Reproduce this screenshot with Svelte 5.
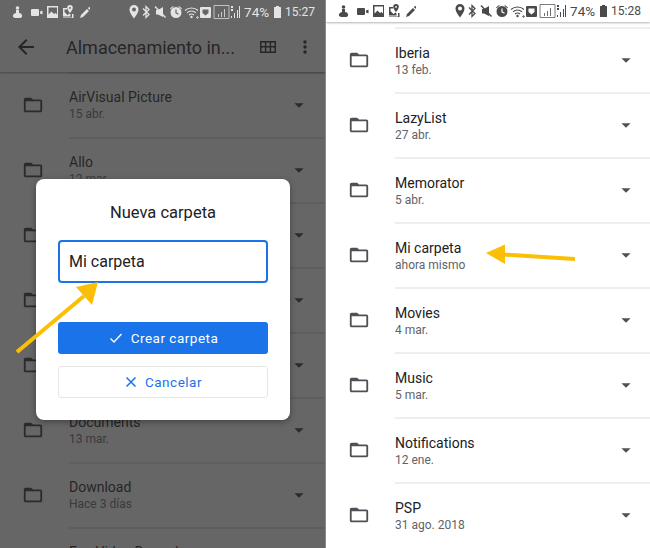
<script>
  // Folder rows for the two phone screens
  const leftRows = [
    { name: "AirVisual Picture", date: "15 abr." },
    { name: "Allo", date: "12 mar." },
    { name: "", date: "" },
    { name: "", date: "" },
    { name: "", date: "" },
    { name: "Documents", date: "13 mar." },
    { name: "Download", date: "Hace 3 días" },
    { name: "Fun Video Recorder", date: "" }
  ];

  const rightRows = [
    { name: "Iberia", date: "13 feb." },
    { name: "LazyList", date: "27 abr." },
    { name: "Memorator", date: "5 abr." },
    { name: "Mi carpeta", date: "ahora mismo" },
    { name: "Movies", date: "4 mar." },
    { name: "Music", date: "5 mar." },
    { name: "Notifications", date: "12 ene." },
    { name: "PSP", date: "31 ago. 2018" }
  ];
</script>

{#snippet statusBar(time)}
  <div class="status">
    <svg class="notif" width="80" height="16" viewBox="0 0 80 16" fill="currentColor">
      <!-- round app icon -->
      <circle cx="7.500" cy="4" r="1.800" />
      <path d="M6 6h3v3l2 .5 1 1.500v2l-1.500 1H5l-2-1V11l1.500-1.500L6 9z" />
      <!-- video -->
      <rect x="21" y="5" width="8" height="7" rx="1" />
      <path d="M30 7.500l2.500-1v4l-2.500-1z" />
      <!-- image -->
      <path fill-rule="evenodd" d="M37 2h11v12H37zM38.500 3.500v7l3-3 2.500 2.500 1.500-1 1.500 1.500V3.500z" />
      <!-- map pin -->
      <path fill-rule="evenodd" d="M53 4h4v1.500h-2.500V8l3 3 2-1.500 1 1V12.500H53zM60 1a2.800 2.800 0 0 1 2.800 2.800C62.800 6 60 9 60 9s-2.800-3-2.800-5.200A2.800 2.800 0 0 1 60 1zM60 3a.9.9 0 1 0 0 1.800A.9.9 0 0 0 60 3zM62 10h1.500v4H53v-.5h9z" />
      <!-- pencil -->
      <path d="M71 11l6-6 2 2-6 6-3 1z" />
      <path d="M77.800 4.200l.9-.9a.7.7 0 0 1 1 0l.3.3v1.800l-.4.4z" />
    </svg>
    <svg class="system" width="111" height="16" viewBox="0 0 111 16" fill="currentColor">
      <!-- location -->
      <path fill-rule="evenodd" d="M5 1a4.500 4.500 0 0 1 4.500 4.500C9.500 9 5 14.500 5 14.500S.5 9 .5 5.500A4.500 4.500 0 0 1 5 1zM5 3.500a2 2 0 1 0 0 4 2 2 0 0 0 0-4z" />
      <!-- bluetooth -->
      <path fill="none" stroke="currentColor" stroke-width="1.300" d="M14 4.500l6 6-3 3v-11l3 3-6 6" />
      <!-- muted speaker -->
      <path d="M27 6h2l5-3v10l-5-2.500h-2z" />
      <path d="M26 2.500l10.500 11" stroke="currentColor" stroke-width="1.400" />
      <!-- alarm -->
      <path fill-rule="evenodd" d="M47 3a5.500 5.500 0 1 1 0 11 5.500 5.500 0 0 1 0-11zM46.400 5.500v3.700l2.800 1.500.6-1-2.200-1.200v-3z" />
      <path d="M41 4.500l3-2.500.6.700-3 2.500zM53 4.500l-3-2.500-.6.700 3 2.500z" />
      <!-- wifi -->
      <path fill="none" stroke="currentColor" stroke-width="1.100" d="M56 6.500a9.500 9.500 0 0 1 13 0M58 8.800a6.500 6.500 0 0 1 9 0M60 11a3.500 3.500 0 0 1 5 0" />
      <circle cx="62.500" cy="13" r="1.200" />
      <path d="M68 12h1v1h1v1h-1v1h-1v-1h-1v-1h1z" opacity=".7" />
      <!-- notification box -->
      <path fill-rule="evenodd" d="M72 3h9a1 1 0 0 1 1 1v9a1 1 0 0 1-1 1h-9a1 1 0 0 1-1-1V4a1 1 0 0 1 1-1zM73.500 5.500v3.500l3 2.500 3-2.500V5.500z" />
      <!-- sim box with bars -->
      <path fill="none" stroke="currentColor" stroke-width=".9" d="M85 1.500h15v13H85z" opacity=".8" />
      <path d="M89 10h1v3h-1zM92 8h1v5h-1zM95 5h1v8h-1z" opacity=".8" />
      <!-- signal -->
      <path d="M102 2h2v2h-2zM102 5h2v2h-2zM102 12h1v2h-1zM105 9h1v5h-1zM108 6h1v8h-1zM110 2h1v12h-1z" />
    </svg>
    <span class="pct">74%</span>
    <svg class="batt" width="7" height="12" viewBox="0 0 7 12" fill="currentColor">
      <path d="M2 0h3v1h1.500a.5.500 0 0 1 .5.500v10a.5.500 0 0 1-.5.500H.5a.5.500 0 0 1-.5-.5v-10A.5.500 0 0 1 .5 1H2z" />
      <path d="M1 2h5v1.500H1z" opacity=".4" />
    </svg>
    <span class="time">{time}</span>
  </div>
{/snippet}

{#snippet folderRow(row)}
  <li class="row">
    <svg class="folder" width="22" height="22" viewBox="0 0 24 24" fill="currentColor">
      <path d="M20 6h-8l-2-2H4c-1.100 0-1.990.9-1.990 2L2 18c0 1.100.9 2 2 2h16c1.100 0 2-.9 2-2V8c0-1.100-.9-2-2-2zm0 12H4V8h16v10z" />
    </svg>
    <div class="info">
      <div class="name">{row.name}</div>
      <div class="date">{row.date}</div>
    </div>
    <svg class="caret" width="22" height="22" viewBox="0 0 24 24" fill="currentColor">
      <path d="M7 10l5 5 5-5z" />
    </svg>
  </li>
{/snippet}

<div class="page">
  <!-- Left phone: new folder dialog over a dimmed list -->
  <section class="phone dim">
    {@render statusBar("15:27")}
    <header class="toolbar">
      <svg class="back" width="24" height="24" viewBox="0 0 24 24" fill="currentColor">
        <path d="M20 11H7.830l5.590-5.590L12 4l-8 8 8 8 1.410-1.410L7.830 13H20z" />
      </svg>
      <h1>Almacenamiento in...</h1>
      <svg class="grid" width="16" height="12" viewBox="0 0 16 12" fill="currentColor">
        <path fill-rule="evenodd" d="M0 0h16v12H0zM1.500 1.500v3.500h3.400V1.500zM6.300 1.500v3.500h3.400V1.500zM11.100 1.500v3.500h3.400V1.500zM1.500 6.500V10.500h3.400V6.500zM6.300 6.500V10.500h3.400V6.500zM11.100 6.500V10.500h3.400V6.500z" />
      </svg>
      <svg class="kebab" width="4" height="14" viewBox="0 0 4 14" fill="currentColor">
        <circle cx="2" cy="2" r="1.700" />
        <circle cx="2" cy="7" r="1.700" />
        <circle cx="2" cy="12" r="1.700" />
      </svg>
    </header>
    <ul class="list">
      {#each leftRows as row}
        {@render folderRow(row)}
      {/each}
    </ul>

    <div class="dialog">
      <h2>Nueva carpeta</h2>
      <div class="field">Mi carpeta</div>
      <button class="primary">
        <svg width="16" height="16" viewBox="0 0 16 16" fill="none" stroke="currentColor" stroke-width="1.400">
          <path d="M2.500 8.500l3.500 3.500 7.500-8" />
        </svg>
        Crear carpeta
      </button>
      <button class="secondary">
        <svg width="14" height="14" viewBox="0 0 14 14" fill="none" stroke="currentColor" stroke-width="1.500">
          <path d="M2.500 2.500l9 9M11.500 2.500l-9 9" />
        </svg>
        Cancelar
      </button>
    </div>
  </section>

  <!-- Right phone: the list with the new folder -->
  <section class="phone light">
    {@render statusBar("15:28")}
    <ul class="list">
      {#each rightRows as row}
        {@render folderRow(row)}
      {/each}
    </ul>
  </section>

  <!-- Yellow annotation arrows -->
  <svg class="arrows" width="650" height="548" viewBox="0 0 650 548">
    <path d="M17 352L84 296" stroke="#fcbf07" stroke-width="4" fill="none" />
    <path d="M98 282L76 287L92 305z" fill="#fcbf07" />
    <path d="M575 259L503 254.500" stroke="#fcbf07" stroke-width="4" fill="none" />
    <path d="M486 253L505 244.500L505 264z" fill="#fcbf07" />
  </svg>
</div>

<style>
  :global(body) {
    margin: 0;
  }

  .page {
    position: relative;
    display: flex;
    width: 650px;
    height: 548px;
    overflow: hidden;
    font-family: Roboto, "Liberation Sans", sans-serif;
    background: #8a8a8a;
  }

  .phone {
    position: relative;
    display: flex;
    flex-direction: column;
    overflow: hidden;
    flex: none;
    color: var(--text);
    background: var(--bg);
  }

  .dim {
    --bg: #666666;
    --text: #262626;
    --sub: #3a3a3a;
    --icon: #2b2b2b;
    --line: #5e5e5e;
    --status: #e4e4e4;
    --shift: -2px;
    --caret-pad: 15px;
    width: 325px;
    margin-right: 1px;
  }

  .light {
    --bg: #ffffff;
    --text: #202124;
    --sub: #5f6368;
    --icon: #4d5055;
    --line: #eeeeee;
    --status: #4a4a4a;
    --shift: 0px;
    --caret-pad: 13px;
    width: 324px;
  }

  /* Status bar */
  .status {
    display: flex;
    align-items: center;
    flex: none;
    height: 23px;
    padding: 0 10px;
    color: var(--status);
  }

  .light .status {
    height: 22px;
    margin-bottom: 5px;
    padding-right: 9px;
    box-shadow: 0 1px 2px rgba(0, 0, 0, 0.3);
  }

  .notif {
    flex: none;
    margin-right: auto;
  }

  .system {
    flex: none;
    margin-right: 4px;
  }

  .pct {
    margin-right: 5px;
    font-size: 13.500px;
  }

  .batt {
    flex: none;
    margin-right: 4px;
  }

  .time {
    font-size: 12px;
  }

  /* Toolbar */
  .toolbar {
    display: flex;
    align-items: center;
    flex: none;
    box-sizing: border-box;
    height: 49px;
    padding: 0 18px 1px 14px;
    box-shadow: 0 1px 2px rgba(0, 0, 0, 0.3);
    z-index: 1;
  }

  .back {
    flex: none;
    margin-right: 28px;
  }

  h1 {
    flex: 1;
    margin: 0;
    font-size: 18px;
    font-weight: 400;
    white-space: nowrap;
  }

  .grid {
    flex: none;
    margin-right: 27px;
  }

  .kebab {
    flex: none;
  }

  /* Folder list */
  .list {
    margin: 0;
    padding: 0;
    list-style: none;
  }

  .row {
    display: flex;
    align-items: center;
    box-sizing: border-box;
    height: 65px;
    padding: 1px var(--caret-pad) 0 22px;
    position: relative;
  }

  .row::before {
    content: "";
    position: absolute;
    top: 0;
    left: 69px;
    right: 0;
    height: 1.500px;
    background: var(--line);
  }

  .folder {
    flex: none;
    margin-right: 25px;
    color: var(--icon);
  }

  .info {
    flex: 1;
    min-width: 0;
    margin-top: var(--shift);
    padding-top: 2px;
  }

  .name {
    height: 18px;
    font-size: 14px;
    line-height: 18px;
  }

  .date {
    height: 16px;
    font-size: 12px;
    line-height: 16px;
    color: var(--sub);
  }

  .caret {
    flex: none;
    color: var(--icon);
  }

  /* Dialog */
  .dialog {
    position: absolute;
    top: 179px;
    left: 36px;
    box-sizing: border-box;
    display: flex;
    flex-direction: column;
    width: 254px;
    height: 241px;
    padding: 0 22px;
    border-radius: 8px;
    background: #ffffff;
    color: #202124;
    box-shadow: 0 2px 6px rgba(0, 0, 0, 0.35);
    z-index: 2;
  }

  h2 {
    margin: 23px 0 16px;
    font-size: 16.500px;
    line-height: 22px;
    font-weight: 400;
    text-align: center;
  }

  .field {
    box-sizing: border-box;
    height: 43px;
    margin-bottom: 39px;
    padding-left: 9px;
    border: 2px solid #1a73e8;
    border-radius: 4px;
    font-size: 16px;
    line-height: 39px;
  }

  button {
    display: flex;
    align-items: center;
    justify-content: center;
    gap: 7px;
    box-sizing: border-box;
    width: 100%;
    height: 32px;
    padding: 0;
    border-radius: 3px;
    font-family: inherit;
    font-size: 13.500px;
    font-weight: 400;
    letter-spacing: 0.5px;
  }

  .primary {
    margin-bottom: 12px;
    border: none;
    background: #1a73e8;
    color: #ffffff;
  }

  .secondary {
    border: 1.500px solid #e6e6e6;
    background: #ffffff;
    color: #1a73e8;
  }

  .arrows {
    position: absolute;
    top: 0;
    left: 0;
    z-index: 3;
    pointer-events: none;
  }
</style>
